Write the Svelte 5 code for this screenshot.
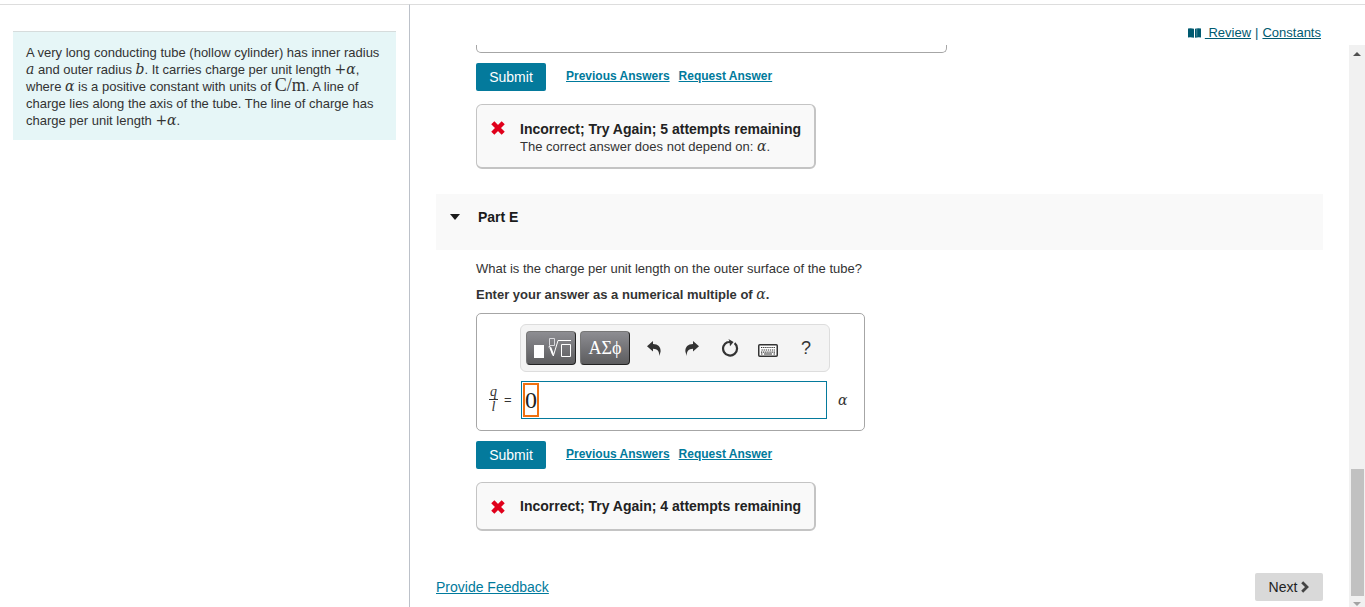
<script lang="ts">
  let answer = $state('0');
  let expanded = $state(true);
</script>

{#snippet alpha()}<i class="math">α</i>{/snippet}

{#snippet actions()}
  <div class="actions">
    <button class="submit" type="button">Submit</button>
    <a href="#previous">Previous Answers</a>
    <a href="#request">Request Answer</a>
  </div>
{/snippet}

{#snippet cross()}
  <svg class="cross" viewBox="0 0 14 14" width="14" height="14" aria-hidden="true">
    <path d="M1.8 1.8L12.2 12.2M12.2 1.8L1.8 12.2" stroke="#e0001b" stroke-width="4.4" />
  </svg>
{/snippet}

<div class="page">
  <aside class="side">
    <p class="problem">
      A very long conducting tube (hollow cylinder) has inner radius
      <i class="math">a</i> and outer radius <i class="math">b</i>. It carries charge per unit length <span class="math">+</span>{@render alpha()},
      where {@render alpha()} is a positive constant with units of <span class="unit">C/m</span>. A line of charge lies along the axis of the tube. The line of charge has charge per unit length <span class="math">+</span>{@render alpha()}.
    </p>
  </aside>

  <main class="main">
    <nav class="top">
      <svg viewBox="0 0 13 10" width="13" height="10" aria-hidden="true">
        <path d="M0 .6Q3 -.2 6 .8V9.8Q3 8.8 0 9.4ZM7 .8Q10 -.2 13 .6V9.4Q10 8.8 7 9.8Z" fill="#005a70" />
        <path d="M8.8 1V8.6" stroke="#6fa0ad" stroke-width=".7" />
      </svg>
      <a href="#review">&nbsp;Review</a>
      <span>|</span>
      <a href="#constants">Constants</a>
    </nav>

    <div class="scroller">
      <div class="content">
        <section class="part">
          <div class="prev-box"></div>
          {@render actions()}
          <div class="feedback tall" role="status">
            {@render cross()}
            <div>
              <strong>Incorrect; Try Again; 5 attempts remaining</strong>
              <p>The correct answer does not depend on: {@render alpha()}.</p>
            </div>
          </div>
        </section>

        <h2 class="part-head">
          <button type="button" aria-expanded={expanded} onclick={() => (expanded = !expanded)}>
            <svg viewBox="0 0 10 6" width="10" height="6" aria-hidden="true">
              <path d="M0 0H10L5 6Z" fill="#1b1b1b" />
            </svg>
            Part E
          </button>
        </h2>

        {#if expanded}
          <section class="part">
            <p class="question">What is the charge per unit length on the outer surface of the tube?</p>
            <p class="question"><b>Enter your answer as a numerical multiple of {@render alpha()}.</b></p>

            <div class="answer">
              <div class="toolbar">
                <button class="dark" type="button" aria-label="Templates">
                  <svg viewBox="0 0 40 24" width="40" height="24" aria-hidden="true">
                    <rect x="3" y="9" width="10" height="13" fill="#fff" />
                    <g fill="none" stroke="#fff">
                      <path d="M18.5 2.5h5v7h-5z" stroke="#d8d8dc" />
                      <path d="M17.5 11L19 10.5L22.3 20L27 4.5H40" />
                      <path d="M19.3 11.5L22 18.5" stroke-width="2" />
                      <path d="M30.5 8.5h9v12h-9z" />
                    </g>
                  </svg>
                </button>
                <button class="dark greek" type="button">ΑΣϕ</button>
                <button class="tool" type="button" aria-label="Undo">
                  <svg viewBox="0 0 14 15" width="14" height="15" aria-hidden="true">
                    <path d="M0 5.2L6 0V3C11 3 14 6 13.6 10.5L12.4 15C12.2 10 10.5 8 6 7.8V10.6Z" fill="#333" />
                  </svg>
                </button>
                <button class="tool" type="button" aria-label="Redo">
                  <svg viewBox="0 0 14 15" width="14" height="15" aria-hidden="true">
                    <path d="M14 5.2L8 0V3C3 3 0 6 .4 10.5L1.6 15C1.8 10 3.5 8 8 7.8V10.6Z" fill="#333" />
                  </svg>
                </button>
                <button class="tool" type="button" aria-label="Reset">
                  <svg viewBox="0 0 18 18" width="18" height="18" aria-hidden="true">
                    <path d="M13.6 4.2A7 7 0 1 1 6.6 3" fill="none" stroke="#333" stroke-width="2.2" />
                    <path d="M7.4 0L12.6 3L9 7.2L8.6 4L6.4 4.2L6 2.4L8.4 2Z" fill="#333" />
                  </svg>
                </button>
                <button class="tool" type="button" aria-label="Keyboard shortcuts">
                  <svg class="keys" viewBox="0 0 20 13" width="20" height="13" aria-hidden="true">
                    <rect x=".75" y=".75" width="18.5" height="11.5" rx="1" fill="#fff" stroke="#333" stroke-width="1.5" />
                    <path d="M3 3.5H17M3.5 6H17M3 8.2H17" stroke="#333" stroke-width="1.2" stroke-dasharray="1.3 .8" />
                    <path d="M3 10H4.5M6 10H14M15.5 10H17" stroke="#333" stroke-width="1.2" />
                  </svg>
                </button>
                <button class="tool help" type="button" aria-label="Help">?</button>
              </div>

              <div class="equation">
                <label class="lhs" for="answer">
                  <span class="fraction"><i>q</i><i>l</i></span>
                  <span>=</span>
                </label>
                <div class="field">
                  <input id="answer" type="text" bind:value={answer} />
                </div>
                {@render alpha()}
              </div>
            </div>

            {@render actions()}
            <div class="feedback" role="status">
              {@render cross()}
              <strong>Incorrect; Try Again; 4 attempts remaining</strong>
            </div>
          </section>
        {/if}

        <footer class="footer">
          <a href="#feedback">Provide Feedback</a>
          <button class="next" type="button">
            Next
            <svg viewBox="0 0 8 12" width="8" height="12" aria-hidden="true">
              <path d="M1.2 1.2L6 6L1.2 10.8" fill="none" stroke="#444" stroke-width="2.8" />
            </svg>
          </button>
        </footer>
      </div>

      <div class="scrollbar" aria-hidden="true">
        <svg viewBox="0 0 8 4" width="8" height="4"><path d="M0 4L4 0L8 4Z" fill="#505050" /></svg>
        <span class="thumb"></span>
        <svg viewBox="0 0 8 4" width="8" height="4"><path d="M0 0L4 4L8 0Z" fill="#a3a3a3" /></svg>
      </div>
    </div>
  </main>
</div>

<style>
:global(body) { margin: 0; background: #fff; }

.page {
  box-sizing: border-box;
  height: 100vh;
  display: flex;
  padding-top: 4px;
  overflow: hidden;
  font-family: "Liberation Sans", Arial, sans-serif;
  font-size: 13px;
  line-height: 17px;
  color: #333;
}
.page :is(p, h2) { margin: 0; }
.page button { font-family: inherit; border: 0; padding: 0; cursor: pointer; }
.page svg { display: block; flex-shrink: 0; }
a { color: #007a9c; }

.math {
  font-family: "DejaVu Serif", "Liberation Serif", serif;
  font-size: 14px; font-weight: 400;
  line-height: 14px;
}
.unit { font-family: "Liberation Serif", "Times New Roman", serif; font-size: 18px; line-height: 14px; }

.side {
  box-sizing: border-box;
  width: round(down, 30vw, 1px);
  flex-shrink: 0;
  padding: 26px 13px;
  border-top: 1px solid #ddd;
}
.problem {
  padding: 12px 12px 11px 13px;
  border-top: 1px solid #d6dcdc;
  background: #e6f6f7;
}

.main {
  flex: 1;
  min-width: 0;
  display: flex; flex-direction: column;
  border-top: 1px solid #ddd;
  border-left: 1px solid #bcc1c9;
}
.top {
  height: 40px;
  flex-shrink: 0;
  box-sizing: border-box;
  display: flex; align-items: center; justify-content: flex-end;
  gap: 4px;
  padding: 15px 44px 0 0;
  color: #005a70;
}
.top a { color: #005a70; }

.scroller { flex: 1; min-height: 0; display: flex; }
.content { flex: 1; min-width: 0; padding: 0 26px; }
.part { padding-left: 40px; }

.prev-box {
  box-sizing: border-box;
  width: 471px;
  height: 8px;
  border: 1px solid #a6a6a6;
  border-top: 0;
  border-radius: 0 0 5px 5px;
}
.actions {
  display: flex; align-items: center;
  gap: 9px;
  margin-top: 10px;
}
.actions a { font-size: 12px; font-weight: 700; line-height: 14px; margin-bottom: 2px; }
.page .submit {
  width: 70px; height: 28px;
  margin-right: 11px;
  border-radius: 2px;
  background: #047a9c;
  color: #fff;
  font-size: 14px;
}

.feedback {
  box-sizing: border-box;
  width: 340px;
  min-height: 49px;
  margin-top: 13px;
  padding: 1px 8px 0 14px;
  display: flex; align-items: center;
  gap: 15px;
  border: 1px solid #c4c4c4;
  border-right-width: 2px;
  border-bottom-width: 2px;
  border-radius: 6px;
  background: #f9f9f9;
}
.feedback strong { font-size: 14px; color: #222; }
.tall { align-items: flex-start; min-height: 65px; padding-top: 16px; }

.part-head { height: 56px; margin-top: 25px !important; background: #f9f9f9; }
.part-head button {
  display: flex; align-items: center;
  gap: 18px;
  margin-left: 14px;
  height: 46px;
  background: none;
  color: #1b1b1b;
  font-size: 14px; font-weight: 700;
}

.part .question { margin-top: 9px; }
.part-head + .part { padding-top: 1px; }

.answer {
  box-sizing: border-box;
  width: 389px;
  margin-top: 10px;
  padding: 10px 13px 11px 12px;
  border: 1px solid #a6a6a6;
  border-radius: 5px;
}
.toolbar {
  box-sizing: border-box;
  width: 310px; height: 48px;
  margin-left: 31px;
  padding-left: 5px;
  display: flex; align-items: center;
  border: 1px solid #ddd;
  border-radius: 6px;
  background: #f4f4f4;
}
.toolbar button { flex-shrink: 0; }
.page .dark {
  box-sizing: border-box;
  width: 50px; height: 34px;
  margin-right: 4px;
  display: flex; align-items: center; justify-content: center;
  border: 1px solid #777;
  border-right-color: #222;
  border-bottom-color: #222;
  border-radius: 4px;
  background: linear-gradient(#8d8d92, #5c5c5e);
  color: #fff;
}
.page .greek { margin-right: 5px; font-family: "Liberation Serif", serif; font-size: 18px; }
.tool {
  width: 38px; height: 34px;
  display: flex; align-items: center; justify-content: center;
  background: none;
  color: #333;
}
.page .help { font-size: 18px; }
.tool .keys { margin-top: 4px; }

.equation { display: flex; align-items: center; margin-top: 9px; }
.lhs { width: 32px; display: flex; align-items: center; gap: 6px; padding-bottom: 2px; }
.fraction {
  width: 9px;
  display: flex; flex-direction: column; align-items: center;
  font-family: "Liberation Serif", serif;
  font-size: 14px;
  line-height: 14px;
}
.fraction i:first-child { width: 100%; text-align: center; border-bottom: 1px solid #333; }
.field {
  box-sizing: border-box;
  width: 306px; height: 38px;
  margin-right: 11px;
  padding: 1px;
  border: 1px solid #047a9c;
}
.field input {
  box-sizing: border-box;
  width: 16px; height: 34px;
  padding: 0;
  border: 2px solid #f0700f;
  outline: 0;
  background: #fff;
  color: #222;
  font-family: "Liberation Serif", serif;
  font-size: 24px;
}

.footer {
  display: flex; align-items: center; justify-content: space-between;
  margin-top: 42px;
  font-size: 14px;
}
.page .next {
  width: 68px; height: 28px;
  display: flex; align-items: center; justify-content: center;
  gap: 4px;
  border-radius: 2px;
  background: #d9d9d9;
  color: #222;
  font-size: 14px;
}

.scrollbar {
  width: 16px;
  box-sizing: border-box;
  padding: 7px 0 1px;
  display: flex; flex-direction: column; align-items: center;
  background: #f1f1f1;
}
.thumb {
  width: 13px;
  height: 23%;
  margin: auto 0 6px;
  background: #c1c1c1;
}
</style>
